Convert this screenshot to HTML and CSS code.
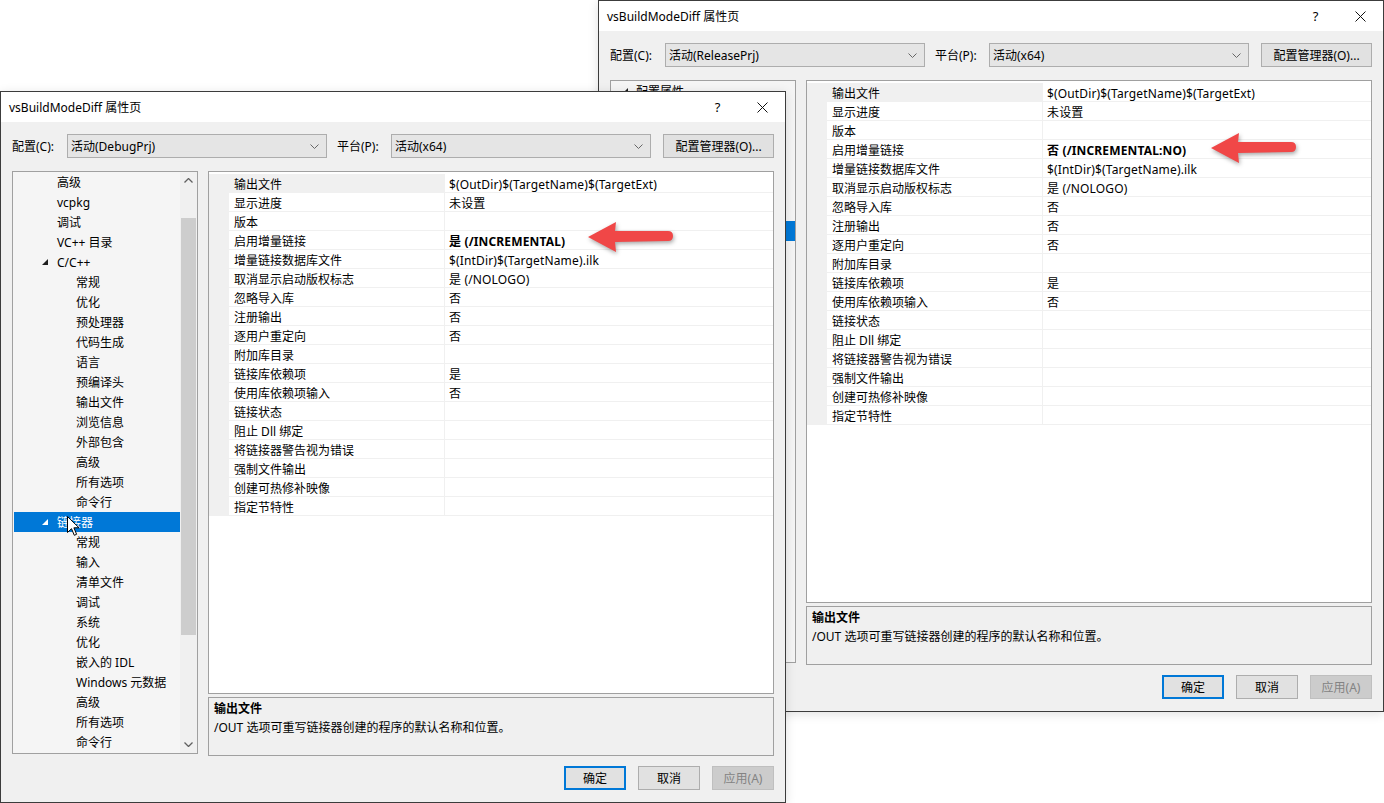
FILE: index.html
```html
<!DOCTYPE html>
<html lang="zh-CN">
<head>
<meta charset="utf-8">
<title>vsBuildModeDiff 属性页</title>
<link rel="stylesheet" href="styles.css">
</head>
<body>
<div class="desk">

  <!-- Back window: ReleasePrj -->
  <div class="win win-back">
    <div class="titlebar">
      <div class="title">vsBuildModeDiff 属性页</div>
      <div class="cap cap-help">?</div>
      <div class="cap"><svg width="11" height="11" viewBox="0 0 11 11"><path d="M0.5 0.5 L10.5 10.5 M10.5 0.5 L0.5 10.5" stroke="#111" stroke-width="1"/></svg></div>
    </div>
    <div class="toolbar">
      <div class="lbl">配置(C):</div>
      <div class="combo"><span>活动(ReleasePrj)</span><svg width="9" height="5" viewBox="0 0 9 5"><polyline points="0.5,0.5 4.5,4.5 8.5,0.5" fill="none" stroke="#666" stroke-width="1"/></svg></div>
      <div class="lbl lbl2">平台(P):</div>
      <div class="combo"><span>活动(x64)</span><svg width="9" height="5" viewBox="0 0 9 5"><polyline points="0.5,0.5 4.5,4.5 8.5,0.5" fill="none" stroke="#666" stroke-width="1"/></svg></div>
      <div class="btn btn-mgr">配置管理器(O)...</div>
    </div>
    <div class="main">
      <div class="tree">
        <div class="tree-list">
          <div class="ti lv1"><span class="tw"><svg width="6" height="6" viewBox="0 0 6 6"><polygon points="6,0 6,6 0,6" fill="#1e1e1e"/></svg></span>配置属性</div>
          <div class="ti lv2 hidden-row"></div>
          <div class="ti lv2 hidden-row"></div>
          <div class="ti lv2 hidden-row"></div>
          <div class="ti lv2 hidden-row"></div>
          <div class="ti lv2 hidden-row"></div>
          <div class="ti lv2 hidden-row"></div>
          <div class="ti lv2 sel"><span class="tw"><svg width="6" height="6" viewBox="0 0 6 6"><polygon points="6,0 6,6 0,6" fill="#fff"/></svg></span></div>
        </div>
      </div>
      <div class="right">
        <div class="pgrid">
          <div class="prow"><div class="g"></div><div class="pn sel">输出文件</div><div class="pv">$(OutDir)$(TargetName)$(TargetExt)</div></div>
          <div class="prow"><div class="g"></div><div class="pn">显示进度</div><div class="pv">未设置</div></div>
          <div class="prow"><div class="g"></div><div class="pn">版本</div><div class="pv"></div></div>
          <div class="prow"><div class="g"></div><div class="pn">启用增量链接</div><div class="pv bold">否 (/INCREMENTAL:NO)</div></div>
          <div class="prow"><div class="g"></div><div class="pn">增量链接数据库文件</div><div class="pv">$(IntDir)$(TargetName).ilk</div></div>
          <div class="prow"><div class="g"></div><div class="pn">取消显示启动版权标志</div><div class="pv">是 (/NOLOGO)</div></div>
          <div class="prow"><div class="g"></div><div class="pn">忽略导入库</div><div class="pv">否</div></div>
          <div class="prow"><div class="g"></div><div class="pn">注册输出</div><div class="pv">否</div></div>
          <div class="prow"><div class="g"></div><div class="pn">逐用户重定向</div><div class="pv">否</div></div>
          <div class="prow"><div class="g"></div><div class="pn">附加库目录</div><div class="pv"></div></div>
          <div class="prow"><div class="g"></div><div class="pn">链接库依赖项</div><div class="pv">是</div></div>
          <div class="prow"><div class="g"></div><div class="pn">使用库依赖项输入</div><div class="pv">否</div></div>
          <div class="prow"><div class="g"></div><div class="pn">链接状态</div><div class="pv"></div></div>
          <div class="prow"><div class="g"></div><div class="pn">阻止 Dll 绑定</div><div class="pv"></div></div>
          <div class="prow"><div class="g"></div><div class="pn">将链接器警告视为错误</div><div class="pv"></div></div>
          <div class="prow"><div class="g"></div><div class="pn">强制文件输出</div><div class="pv"></div></div>
          <div class="prow"><div class="g"></div><div class="pn">创建可热修补映像</div><div class="pv"></div></div>
          <div class="prow"><div class="g"></div><div class="pn">指定节特性</div><div class="pv"></div></div>
        </div>
        <div class="desc">
          <div class="bold">输出文件</div>
          <div>/OUT 选项可重写链接器创建的程序的默认名称和位置。</div>
        </div>
      </div>
    </div>
    <div class="buttons">
      <div class="btn btn-d btn-ok">确定</div>
      <div class="btn btn-d">取消</div>
      <div class="btn btn-d btn-dis">应用(A)</div>
    </div>
  </div>

  <!-- Front window: DebugPrj -->
  <div class="win win-front">
    <div class="titlebar">
      <div class="title">vsBuildModeDiff 属性页</div>
      <div class="cap cap-help">?</div>
      <div class="cap"><svg width="11" height="11" viewBox="0 0 11 11"><path d="M0.5 0.5 L10.5 10.5 M10.5 0.5 L0.5 10.5" stroke="#111" stroke-width="1"/></svg></div>
    </div>
    <div class="toolbar">
      <div class="lbl">配置(C):</div>
      <div class="combo"><span>活动(DebugPrj)</span><svg width="9" height="5" viewBox="0 0 9 5"><polyline points="0.5,0.5 4.5,4.5 8.5,0.5" fill="none" stroke="#666" stroke-width="1"/></svg></div>
      <div class="lbl lbl2">平台(P):</div>
      <div class="combo"><span>活动(x64)</span><svg width="9" height="5" viewBox="0 0 9 5"><polyline points="0.5,0.5 4.5,4.5 8.5,0.5" fill="none" stroke="#666" stroke-width="1"/></svg></div>
      <div class="btn btn-mgr">配置管理器(O)...</div>
    </div>
    <div class="main">
      <div class="tree">
        <div class="tree-list">
          <div class="ti lv2"><span class="tw"></span>高级</div>
          <div class="ti lv2"><span class="tw"></span>vcpkg</div>
          <div class="ti lv2"><span class="tw"></span>调试</div>
          <div class="ti lv2"><span class="tw"></span>VC++ 目录</div>
          <div class="ti lv2"><span class="tw"><svg width="6" height="6" viewBox="0 0 6 6"><polygon points="6,0 6,6 0,6" fill="#1e1e1e"/></svg></span>C/C++</div>
          <div class="ti lv3"><span class="tw"></span>常规</div>
          <div class="ti lv3"><span class="tw"></span>优化</div>
          <div class="ti lv3"><span class="tw"></span>预处理器</div>
          <div class="ti lv3"><span class="tw"></span>代码生成</div>
          <div class="ti lv3"><span class="tw"></span>语言</div>
          <div class="ti lv3"><span class="tw"></span>预编译头</div>
          <div class="ti lv3"><span class="tw"></span>输出文件</div>
          <div class="ti lv3"><span class="tw"></span>浏览信息</div>
          <div class="ti lv3"><span class="tw"></span>外部包含</div>
          <div class="ti lv3"><span class="tw"></span>高级</div>
          <div class="ti lv3"><span class="tw"></span>所有选项</div>
          <div class="ti lv3"><span class="tw"></span>命令行</div>
          <div class="ti lv2 sel"><span class="tw"><svg width="6" height="6" viewBox="0 0 6 6"><polygon points="6,0 6,6 0,6" fill="#fff"/></svg></span>链接器</div>
          <div class="ti lv3"><span class="tw"></span>常规</div>
          <div class="ti lv3"><span class="tw"></span>输入</div>
          <div class="ti lv3"><span class="tw"></span>清单文件</div>
          <div class="ti lv3"><span class="tw"></span>调试</div>
          <div class="ti lv3"><span class="tw"></span>系统</div>
          <div class="ti lv3"><span class="tw"></span>优化</div>
          <div class="ti lv3"><span class="tw"></span>嵌入的 IDL</div>
          <div class="ti lv3"><span class="tw"></span>Windows 元数据</div>
          <div class="ti lv3"><span class="tw"></span>高级</div>
          <div class="ti lv3"><span class="tw"></span>所有选项</div>
          <div class="ti lv3"><span class="tw"></span>命令行</div>
        </div>
        <div class="vscroll">
          <div class="sb-arrow"><svg width="9" height="5" viewBox="0 0 9 5"><polyline points="0.5,4.5 4.5,0.5 8.5,4.5" fill="none" stroke="#606060" stroke-width="1.3"/></svg></div>
          <div class="thumb"></div>
          <div class="sb-fill"></div>
          <div class="sb-arrow"><svg width="9" height="5" viewBox="0 0 9 5"><polyline points="0.5,0.5 4.5,4.5 8.5,0.5" fill="none" stroke="#606060" stroke-width="1.3"/></svg></div>
        </div>
      </div>
      <div class="right">
        <div class="pgrid">
          <div class="prow"><div class="g"></div><div class="pn sel">输出文件</div><div class="pv">$(OutDir)$(TargetName)$(TargetExt)</div></div>
          <div class="prow"><div class="g"></div><div class="pn">显示进度</div><div class="pv">未设置</div></div>
          <div class="prow"><div class="g"></div><div class="pn">版本</div><div class="pv"></div></div>
          <div class="prow"><div class="g"></div><div class="pn">启用增量链接</div><div class="pv bold">是 (/INCREMENTAL)</div></div>
          <div class="prow"><div class="g"></div><div class="pn">增量链接数据库文件</div><div class="pv">$(IntDir)$(TargetName).ilk</div></div>
          <div class="prow"><div class="g"></div><div class="pn">取消显示启动版权标志</div><div class="pv">是 (/NOLOGO)</div></div>
          <div class="prow"><div class="g"></div><div class="pn">忽略导入库</div><div class="pv">否</div></div>
          <div class="prow"><div class="g"></div><div class="pn">注册输出</div><div class="pv">否</div></div>
          <div class="prow"><div class="g"></div><div class="pn">逐用户重定向</div><div class="pv">否</div></div>
          <div class="prow"><div class="g"></div><div class="pn">附加库目录</div><div class="pv"></div></div>
          <div class="prow"><div class="g"></div><div class="pn">链接库依赖项</div><div class="pv">是</div></div>
          <div class="prow"><div class="g"></div><div class="pn">使用库依赖项输入</div><div class="pv">否</div></div>
          <div class="prow"><div class="g"></div><div class="pn">链接状态</div><div class="pv"></div></div>
          <div class="prow"><div class="g"></div><div class="pn">阻止 Dll 绑定</div><div class="pv"></div></div>
          <div class="prow"><div class="g"></div><div class="pn">将链接器警告视为错误</div><div class="pv"></div></div>
          <div class="prow"><div class="g"></div><div class="pn">强制文件输出</div><div class="pv"></div></div>
          <div class="prow"><div class="g"></div><div class="pn">创建可热修补映像</div><div class="pv"></div></div>
          <div class="prow"><div class="g"></div><div class="pn">指定节特性</div><div class="pv"></div></div>
        </div>
        <div class="desc">
          <div class="bold">输出文件</div>
          <div>/OUT 选项可重写链接器创建的程序的默认名称和位置。</div>
        </div>
      </div>
    </div>
    <div class="buttons">
      <div class="btn btn-d btn-ok">确定</div>
      <div class="btn btn-d">取消</div>
      <div class="btn btn-d btn-dis">应用(A)</div>
    </div>
  </div>

  <!-- Annotation arrows -->
  <svg class="arrow arrow-front" width="94" height="40" viewBox="584 218 94 40">
    <path d="M588 237 L616 222 L615 231 L668 231 Q673 231 673 236 Q673 241 668 241 L615 242 L616 252 Z" fill="#f04747"/>
  </svg>
  <svg class="arrow arrow-back" width="94" height="40" viewBox="1207 129 94 40">
    <path d="M1211 148 L1239 133 L1238 142 L1291 142 Q1296 142 1296 147 Q1296 152 1291 152 L1238 153 L1239 163 Z" fill="#f04747"/>
  </svg>

  <!-- Mouse cursor -->
  <svg class="cursor" width="13" height="21" viewBox="0 0 13 21">
    <path d="M0.5 0.5 L0.5 16.5 L4.5 12.7 L7.3 19.3 L9.6 18.3 L6.9 11.8 L12 11.8 Z" fill="#fff" stroke="#000" stroke-width="1" stroke-linejoin="miter"/>
  </svg>
</div>
</body>
</html>
```

FILE: styles.css
```css
* { box-sizing: border-box; }
html, body { margin: 0; padding: 0; }
body {
  width: 1384px;
  height: 803px;
  overflow: hidden;
  background: #fff;
  font-family: "Noto Sans", "Noto Sans CJK SC", sans-serif;
  font-size: 12px;
  color: #000;
}
.desk { position: relative; width: 1384px; height: 803px; }

.win {
  position: absolute;
  width: 786px;
  height: 712px;
  border: 1px solid #3c3c3c;
  background: #f0f0f0;
  display: flex;
  flex-direction: column;
  box-shadow: 0 2px 10px rgba(0,0,0,0.12);
}
.win-back { left: 598px; top: 0; }
.win-front { left: 0; top: 91px; }

.titlebar {
  flex: none;
  height: 30px;
  background: #fff;
  display: flex;
  align-items: center;
  padding-left: 8px;
}
.title { flex: 1; white-space: nowrap; }
.cap {
  width: 45px;
  height: 30px;
  display: flex;
  align-items: center;
  justify-content: center;
}
.cap-help { font-size: 13px; }

.toolbar {
  flex: none;
  display: flex;
  align-items: center;
  height: 24px;
  margin-top: 12px;
  padding-left: 11px;
}
.lbl { width: 55px; white-space: nowrap; }
.lbl2 { margin-left: 10px; width: 54px; }
.combo {
  width: 260px;
  height: 24px;
  border: 1px solid #adadad;
  background: #e5e5e5;
  display: flex;
  align-items: center;
  justify-content: space-between;
  padding: 0 7px 0 3px;
}
.btn {
  height: 24px;
  border: 1px solid #adadad;
  background: #e1e1e1;
  display: flex;
  align-items: center;
  justify-content: center;
  white-space: nowrap;
}
.btn-mgr { margin-left: 12px; width: 111px; }

.main {
  flex: none;
  display: flex;
  gap: 10px;
  margin-top: 13px;
  padding-left: 11px;
}
.tree {
  width: 186px;
  height: 583px;
  border: 1px solid #a0a0a0;
  background: #f5f5f5;
  display: flex;
  overflow: hidden;
}
.tree-list { flex: 1; padding-left: 1px; overflow: hidden; }
.ti {
  height: 20px;
  display: flex;
  align-items: center;
  white-space: nowrap;
}
.ti.sel { background: #0078d7; color: #fff; }
.tw { width: 15px; flex: none; display: flex; align-items: center; }
.lv1 { padding-left: 10px; }
.lv1 .tw { width: 14px; }
.lv2 { padding-left: 28px; }
.lv3 { padding-left: 47px; }

.vscroll {
  flex: none;
  width: 17px;
  background: #f0f0f0;
  display: flex;
  flex-direction: column;
  align-items: center;
}
.sb-arrow {
  flex: none;
  width: 17px;
  height: 17px;
  display: flex;
  align-items: center;
  justify-content: center;
}
.thumb {
  flex: none;
  width: 15px;
  height: 417px;
  margin-top: 29px;
  background: #cdcdcd;
}
.sb-fill { flex: 1; }

.right {
  width: 566px;
  display: flex;
  flex-direction: column;
  gap: 3px;
}
.pgrid {
  height: 523px;
  border: 1px solid #a0a0a0;
  background: #fff;
  padding-top: 2px;
}
.prow {
  display: grid;
  grid-template-columns: 20px 215px 1fr;
  height: 19px;
}
.g { background: #f0f0f0; }
.pn, .pv {
  padding-top: 2px;
  line-height: 18px;
  border-bottom: 1px solid #f0f0f0;
  white-space: nowrap;
  overflow: hidden;
}
.pn { padding-left: 5px; }
.pn.sel { background: #f0f0f0; }
.pv { padding-left: 4px; border-left: 1px solid #f0f0f0; letter-spacing: 0.15px; }
.bold { font-weight: bold; }

.desc {
  height: 59px;
  border: 1px solid #a0a0a0;
  background: #f0f0f0;
  padding: 1px 5px 0;
  line-height: 19px;
}

.buttons {
  flex: none;
  display: flex;
  justify-content: flex-end;
  gap: 12px;
  margin-top: 10px;
  padding-right: 11px;
}
.btn-d { width: 62px; }
.btn-ok { border: 2px solid #0078d7; }
.btn-dis { background: #cccccc; border-color: #bfbfbf; color: #838383; }

.arrow {
  position: absolute;
  filter: drop-shadow(1px 2px 2px rgba(0,0,0,0.35));
}
.arrow-front { left: 584px; top: 218px; }
.arrow-back { left: 1207px; top: 129px; }

.cursor { position: absolute; left: 67px; top: 516px; }
```
